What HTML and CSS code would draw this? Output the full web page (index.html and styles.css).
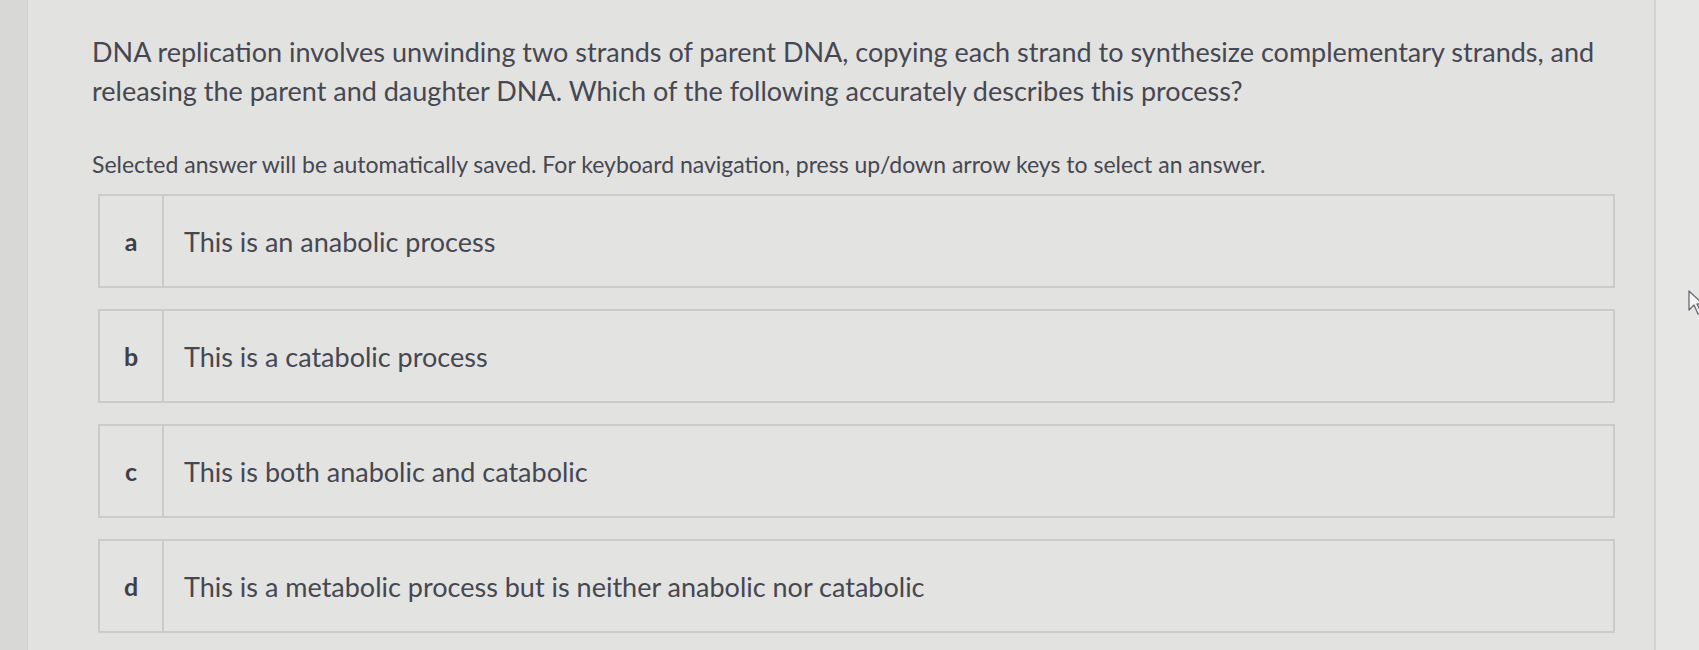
FILE: index.html
```html
<!DOCTYPE html>
<html lang="en">
<head>
<meta charset="utf-8">
<title>Question</title>
<link rel="stylesheet" href="styles.css">
</head>
<body>
<div class="page">
  <div class="edge-left"></div>
  <main class="main">
    <p class="question">DNA replication involves unwinding two strands of parent DNA, copying each strand to synthesize complementary strands, and releasing the parent and daughter DNA. Which of the following accurately describes this process?</p>
    <p class="hint">Selected answer will be automatically saved. For keyboard navigation, press up/down arrow keys to select an answer.</p>
    <div class="answers">
      <div class="answer"><div class="label">a</div><div class="text">This is an anabolic process</div></div>
      <div class="answer"><div class="label">b</div><div class="text">This is a catabolic process</div></div>
      <div class="answer"><div class="label">c</div><div class="text">This is both anabolic and catabolic</div></div>
      <div class="answer"><div class="label">d</div><div class="text">This is a metabolic process but is neither anabolic nor catabolic</div></div>
    </div>
  </main>
  <aside class="side">
    <svg class="cursor" width="16" height="26" viewBox="0 0 16 26"><path d="M1 1 L1 20 L6 15 L10 24 L13 22.5 L9 14 L15 14 Z" fill="#f4f4f4" stroke="#6a6a70" stroke-width="1.3" stroke-linejoin="round"/></svg>
  </aside>
</div>
</body>
</html>
```
FILE: styles.css
```css
html, body {
  margin: 0;
  padding: 0;
}
body {
  width: 1699px;
  height: 650px;
  overflow: hidden;
  background: #dcdcda;
  font-family: "Lato", "Noto Sans", sans-serif;
  color: #464751;
}
.page {
  display: flex;
  height: 650px;
}
.edge-left {
  width: 27px;
  background: #d8d8d6;
  border-right: 1px solid #d0d0ce;
}
.main {
  flex: 1;
  background: #e2e2e0;
  padding: 32px 0 0 64px;
}
.question {
  margin: 0;
  width: 1510px;
  font-size: 27px;
  line-height: 39px;
}
.hint {
  margin: 39px 0 0;
  font-size: 23px;
  line-height: 30px;
}
.answers {
  margin: 15px 0 0 6px;
  width: 1517px;
  display: flex;
  flex-direction: column;
  gap: 21px;
}
.answer {
  display: flex;
  height: 94px;
  border: 2px solid #cbcbc9;
  background: #e3e3e1;
  box-sizing: border-box;
}
.label {
  width: 62px;
  border-right: 2px solid #cbcbc9;
  display: flex;
  align-items: center;
  justify-content: center;
  font-size: 25px;
  font-weight: 700;
  color: #3e3f48;
}
.text {
  display: flex;
  align-items: center;
  padding-left: 20px;
  font-size: 27px;
}
.side {
  width: 43px;
  background: #e6e6e4;
  border-left: 2px solid #d2d2d0;
  position: relative;
}
.cursor {
  position: absolute;
  left: 32px;
  top: 290px;
}
```
